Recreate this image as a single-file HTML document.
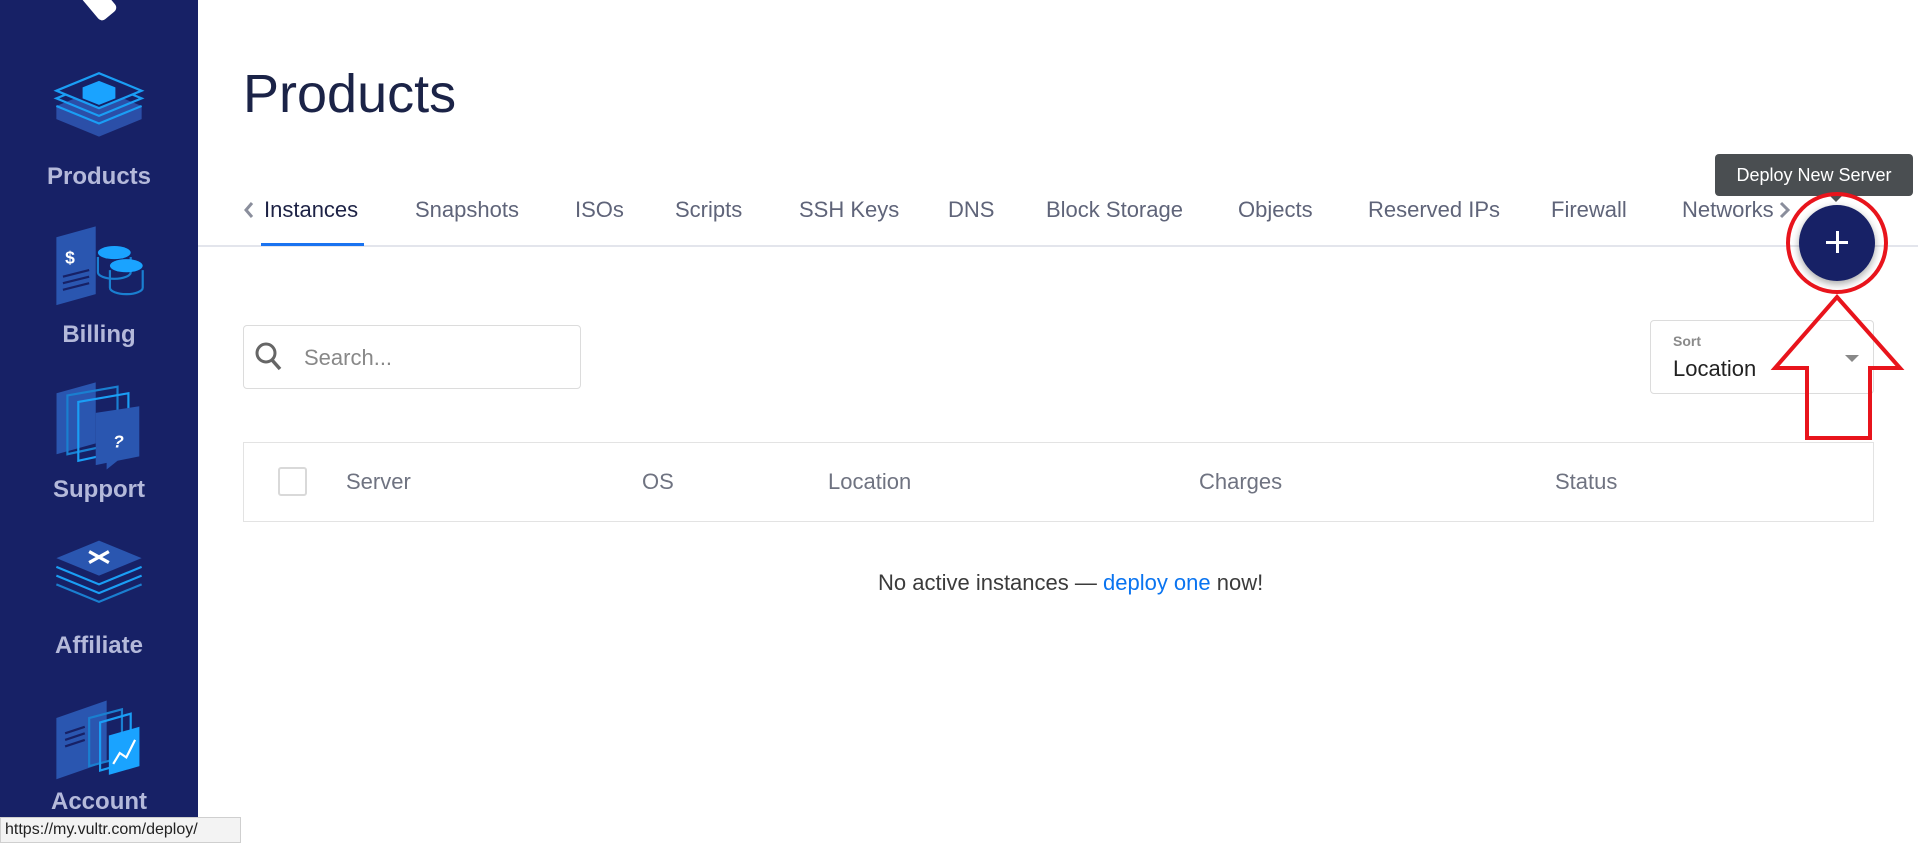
<!DOCTYPE html>
<html><head><meta charset="utf-8">
<style>
*{margin:0;padding:0;box-sizing:border-box}
body{width:1918px;height:843px;overflow:hidden;background:#fff;font-family:"Liberation Sans",Arial,sans-serif;position:relative}
.sb{position:absolute;left:0;top:0;width:198px;height:843px;background:#172166}
.lbl{position:absolute;left:0;width:198px;text-align:center;color:#b4b9da;font-weight:bold;font-size:24px}
.ico{position:absolute;left:52px}
.a{position:absolute;white-space:nowrap}
.tab{position:absolute;top:197px;font-size:22px;color:#5f6479;white-space:nowrap}
.th{position:absolute;top:469px;font-size:22px;color:#6f7381}
</style></head><body>
<div class="sb">
  <div style="position:absolute;left:86px;top:-20px;width:22px;height:40px;background:#fff;border-radius:5px;transform:rotate(-40deg)"></div>
  <svg class="ico" style="top:62px" width="94" height="88" viewBox="0 0 86 80">
    <path d="M4 40 L43 24 L82 40 L82 52 L43 68 L4 52Z" fill="#2b4fa8"/>
    <path d="M4 40 L43 56 L82 40" fill="none" stroke="#1a9ef5" stroke-width="2"/>
    <path d="M4 33 L43 17 L82 33 L43 49Z" fill="none" stroke="#1a9ef5" stroke-width="2"/>
    <path d="M4 26 L43 10 L82 26 L43 42Z" fill="#172166" stroke="#1a9ef5" stroke-width="2"/>
    <path d="M28 23 L43 17 L58 23 L58 33 L43 39 L28 33Z" fill="#1aa3ff"/>
  </svg>
  <div class="lbl" style="top:163px">Products</div>
  <svg class="ico" style="top:224px" width="94" height="90" viewBox="0 0 86 82">
    <path d="M4 12 L40 2 L40 64 L4 74Z" fill="#2a56b0"/>
    <text x="12" y="36" fill="#fff" font-size="16" font-weight="bold" font-family="Liberation Sans">$</text>
    <path d="M10 48 L34 42 M10 54 L34 48 M10 60 L34 54" stroke="#172166" stroke-width="2"/>
    <ellipse cx="57" cy="26" rx="15" ry="6" fill="#1aa3ff"/>
    <path d="M42 30 v14 a15 6 0 0 0 30 0 v-14" fill="none" stroke="#1a7fd0" stroke-width="2"/>
    <ellipse cx="68" cy="38" rx="15" ry="6" fill="#1aa3ff"/>
    <path d="M53 42 v16 a15 6 0 0 0 30 0 v-16" fill="none" stroke="#1a7fd0" stroke-width="2"/>
  </svg>
  <div class="lbl" style="top:321px">Billing</div>
  <svg class="ico" style="top:378px" width="94" height="98" viewBox="0 0 86 90">
    <path d="M4 14 L40 4 L40 60 L4 70Z" fill="#2a56b0"/>
    <path d="M14 16 L60 8 L60 60 L14 70Z" fill="none" stroke="#1a7fd0" stroke-width="2"/>
    <path d="M24 22 L70 14 L70 66 L24 76Z" fill="none" stroke="#1a9ef5" stroke-width="2"/>
    <path d="M40 32 L80 26 L80 72 L60 76 L50 84 L50 78 L40 80Z" fill="#2a56b0"/>
    <text x="56" y="64" fill="#fff" font-size="16" font-weight="bold" font-style="italic" font-family="Liberation Sans">?</text>
  </svg>
  <div class="lbl" style="top:476px">Support</div>
  <svg class="ico" style="top:536px" width="94" height="88" viewBox="0 0 86 80">
    <path d="M4 44 L43 60 L82 44" fill="none" stroke="#1a7fd0" stroke-width="2"/>
    <path d="M4 36 L43 52 L82 36" fill="none" stroke="#1a9ef5" stroke-width="2"/>
    <path d="M4 28 L43 44 L82 28" fill="none" stroke="#1a9ef5" stroke-width="2"/>
    <path d="M4 20 L43 4 L82 20 L43 36Z" fill="#2a56b0"/>
    <path d="M34 14 L52 24 M52 14 L34 24" stroke="#fff" stroke-width="3"/>
  </svg>
  <div class="lbl" style="top:632px">Affiliate</div>
  <svg class="ico" style="top:696px" width="94" height="90" viewBox="0 0 86 82">
    <path d="M4 20 L50 4 L50 60 L4 76Z" fill="#2a56b0"/>
    <path d="M12 34 L30 28 M12 40 L30 34 M12 46 L30 40" stroke="#172166" stroke-width="2"/>
    <path d="M34 20 L64 12 L64 56 L34 64Z" fill="none" stroke="#1a7fd0" stroke-width="2"/>
    <path d="M44 24 L72 16 L72 60 L44 68Z" fill="none" stroke="#1a9ef5" stroke-width="2"/>
    <path d="M52 36 L80 28 L80 64 L52 72Z" fill="#1aa3ff"/>
    <path d="M56 62 L62 52 L68 56 L76 40" fill="none" stroke="#fff" stroke-width="2"/>
  </svg>
  <div class="lbl" style="top:788px">Account</div>
</div>

<div class="a" style="left:243px;top:63px;font-size:54px;color:#1b2347">Products</div>

<svg class="a" style="left:243px;top:200px" width="12" height="20"><path d="M9 3 L3 10 L9 17" fill="none" stroke="#8a8e9c" stroke-width="3"/></svg>
<div style="position:absolute;left:260px;top:190px;width:1520px;height:50px;overflow:hidden">
<div class="tab" style="left:4px;top:7px;color:#1d2245">Instances</div>
<div class="tab" style="left:155px;top:7px">Snapshots</div>
<div class="tab" style="left:315px;top:7px">ISOs</div>
<div class="tab" style="left:415px;top:7px">Scripts</div>
<div class="tab" style="left:539px;top:7px">SSH Keys</div>
<div class="tab" style="left:688px;top:7px">DNS</div>
<div class="tab" style="left:786px;top:7px">Block Storage</div>
<div class="tab" style="left:978px;top:7px">Objects</div>
<div class="tab" style="left:1108px;top:7px">Reserved IPs</div>
<div class="tab" style="left:1291px;top:7px">Firewall</div>
<div class="tab" style="left:1422px;top:7px">Networks</div>
</div>
<svg class="a" style="left:1778px;top:200px" width="14" height="20"><path d="M3 3 L10 10 L3 17" fill="none" stroke="#8a8e9c" stroke-width="3"/></svg>
<div class="a" style="left:198px;top:245px;width:1720px;height:2px;background:#e3e5ec"></div>
<div class="a" style="left:261px;top:243px;width:103px;height:3px;background:#1a73f0"></div>

<div class="a" style="left:243px;top:325px;width:338px;height:64px;border:1px solid #dcdcdc;border-radius:4px"></div>
<svg class="a" style="left:254px;top:341px" width="30" height="32"><circle cx="12" cy="12" r="9" fill="none" stroke="#666" stroke-width="3"/><path d="M18 19 L26 28" stroke="#666" stroke-width="3.5"/></svg>
<div class="a" style="left:304px;top:345px;font-size:22px;color:#888">Search...</div>

<div class="a" style="left:1650px;top:320px;width:224px;height:74px;border:1px solid #dcdcdc;border-radius:4px"></div>
<div class="a" style="left:1673px;top:333px;font-size:14px;font-weight:bold;color:#8a8a8a">Sort</div>
<div class="a" style="left:1673px;top:356px;font-size:22px;color:#222">Location</div>
<div class="a" style="left:1845px;top:355px;width:0;height:0;border-left:7px solid transparent;border-right:7px solid transparent;border-top:7px solid #888"></div>

<div class="a" style="left:243px;top:442px;width:1631px;height:80px;border:1px solid #e3e3e3"></div>
<div class="a" style="left:278px;top:467px;width:29px;height:29px;border:2px solid #d9d9d9;border-radius:3px"></div>
<div class="th" style="left:346px">Server</div>
<div class="th" style="left:642px">OS</div>
<div class="th" style="left:828px">Location</div>
<div class="th" style="left:1199px">Charges</div>
<div class="th" style="left:1555px">Status</div>

<div class="a" style="left:878px;top:570px;font-size:22px;color:#3b3b3b">No active instances — <span style="color:#0a74f0">deploy one</span> now!</div>

<div class="a" style="left:1715px;top:154px;width:198px;height:42px;background:#4a4e51;border-radius:4px;color:#fff;font-size:18px;line-height:42px;text-align:center">Deploy New Server</div>
<div class="a" style="left:1830px;top:196px;width:0;height:0;border-left:6px solid transparent;border-right:6px solid transparent;border-top:6px solid #4a4e51"></div>

<div class="a" style="left:1799px;top:205px;width:76px;height:76px;border-radius:50%;background:#172166;box-shadow:0 3px 8px rgba(0,0,0,.35)"></div>
<div class="a" style="left:1826px;top:241px;width:22px;height:3px;background:#fff"></div>
<div class="a" style="left:1836px;top:231px;width:3px;height:22px;background:#fff"></div>

<svg class="a" style="left:0;top:0" width="1918" height="843">
  <ellipse cx="1837" cy="243" rx="49" ry="49" fill="none" stroke="#e8141c" stroke-width="4"/>
  <polygon points="1837,297 1900,368 1870,368 1870,438 1807,438 1807,368 1775,368" fill="none" stroke="#e8141c" stroke-width="4"/>
</svg>

<div class="a" style="left:0;top:817px;width:241px;height:26px;background:#f3f3f3;border:1px solid #cfcfcf;font-size:16px;color:#222;padding:3px 0 0 4px">https://my.vultr.com/deploy/</div>
</body></html>
